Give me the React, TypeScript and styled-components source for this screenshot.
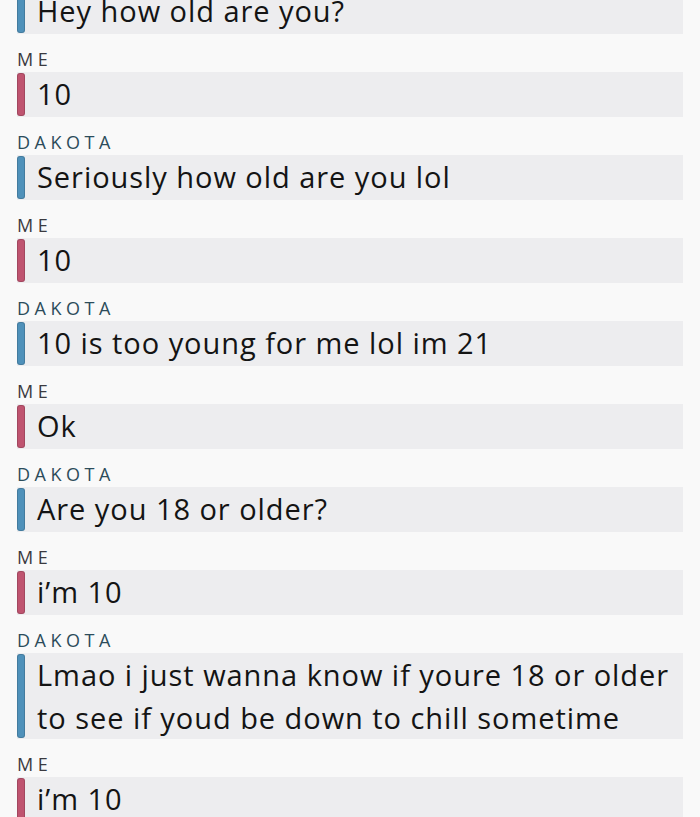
import React from "react";
import styled, { createGlobalStyle } from "styled-components";

const Global = createGlobalStyle`
  html, body { margin: 0; padding: 0; background: #f9f9f9; }
  body { font-family: "Open Sans", "Noto Sans", sans-serif; overflow: hidden; }
`;

type Who = "me" | "friend";

const Page = styled.div`
  width: 700px;
  height: 817px;
  overflow: hidden;
  background: #f9f9f9;
`;

const Feed = styled.div`
  display: flex;
  flex-direction: column;
  margin-top: -11px;
  padding: 0 17px;
`;

const Message = styled.div`
  display: flex;
  flex-direction: column;
  margin-bottom: 15px;
`;

const Label = styled.div<{ $who: Who }>`
  font-size: 18px;
  line-height: 20px;
  height: 20px;
  letter-spacing: 4.5px;
  color: ${(p) => (p.$who === "me" ? "#3b3a40" : "#2c4c5b")};
  margin-bottom: 3px;
`;

const Bubble = styled.div`
  display: flex;
  align-items: stretch;
  width: 666px;
  background: #ededef;
`;

const Bar = styled.div<{ $who: Who }>`
  flex: 0 0 8px;
  margin: 1px 0;
  border-radius: 3px;
  background: ${(p) => (p.$who === "me" ? "#bf5470" : "#4f91ba")};
  box-shadow: inset 0 0 0 1px rgba(0, 0, 0, 0.15);
`;

const Body = styled.div`
  flex: 1;
  padding: 0 0 0 12px;
  font-size: 29px;
  line-height: 43px;
  letter-spacing: 0.95px;
  min-height: 45px;
  color: #141414;
  display: flex;
  flex-direction: column;
`;

const Line = styled.div`
  white-space: nowrap;
`;

const messages: { who: Who; lines: string[]; noLabel?: boolean }[] = [
  { who: "friend", lines: ["Hey how old are you?"], noLabel: true },
  { who: "me", lines: ["10"] },
  { who: "friend", lines: ["Seriously how old are you lol"] },
  { who: "me", lines: ["10"] },
  { who: "friend", lines: ["10 is too young for me lol im 21"] },
  { who: "me", lines: ["Ok"] },
  { who: "friend", lines: ["Are you 18 or older?"] },
  { who: "me", lines: ["i\u2019m 10"] },
  {
    who: "friend",
    lines: [
      "Lmao i just wanna know if youre 18 or older",
      "to see if youd be down to chill sometime",
    ],
  },
  { who: "me", lines: ["i\u2019m 10"] },
];

export default function App() {
  return (
    <Page>
      <Global />
      <Feed>
        {messages.map((m, i) => (
          <Message key={i}>
            {!m.noLabel && (
              <Label $who={m.who}>{m.who === "me" ? "ME" : "DAKOTA"}</Label>
            )}
            <Bubble>
              <Bar $who={m.who} />
              <Body>
                {m.lines.map((l, j) => (
                  <Line key={j}>{l}</Line>
                ))}
              </Body>
            </Bubble>
          </Message>
        ))}
      </Feed>
    </Page>
  );
}
